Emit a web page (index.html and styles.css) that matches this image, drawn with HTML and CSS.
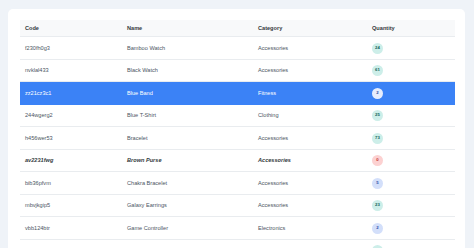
FILE: index.html
```html
<!DOCTYPE html>
<html>
<head>
<meta charset="utf-8">
<link rel="stylesheet" href="styles.css">
</head>
<body>
<div class="page">
  <div class="card">
    <table class="grid">
      <colgroup>
        <col class="c-code"><col class="c-name"><col class="c-cat"><col class="c-qty">
      </colgroup>
      <thead>
        <tr><th>Code</th><th>Name</th><th>Category</th><th>Quantity</th></tr>
      </thead>
      <tbody>
        <tr><td>f230fh0g3</td><td>Bamboo Watch</td><td>Accessories</td><td><span class="badge teal">24</span></td></tr>
        <tr><td>nvklal433</td><td>Black Watch</td><td>Accessories</td><td><span class="badge teal">61</span></td></tr>
        <tr class="selected"><td>zz21cz3c1</td><td>Blue Band</td><td>Fitness</td><td><span class="badge sel">2</span></td></tr>
        <tr><td>244wgerg2</td><td>Blue T-Shirt</td><td>Clothing</td><td><span class="badge teal">25</span></td></tr>
        <tr><td>h456wer53</td><td>Bracelet</td><td>Accessories</td><td><span class="badge teal">73</span></td></tr>
        <tr class="out"><td>av2231fwg</td><td>Brown Purse</td><td>Accessories</td><td><span class="badge red">0</span></td></tr>
        <tr><td>bib36pfvm</td><td>Chakra Bracelet</td><td>Accessories</td><td><span class="badge blue">5</span></td></tr>
        <tr><td>mbvjkgip5</td><td>Galaxy Earrings</td><td>Accessories</td><td><span class="badge teal">23</span></td></tr>
        <tr><td>vbb124btr</td><td>Game Controller</td><td>Electronics</td><td><span class="badge blue">2</span></td></tr>
        <tr><td>cm230f032</td><td>Gaming Set</td><td>Electronics</td><td><span class="badge teal">63</span></td></tr>
      </tbody>
    </table>
  </div>
</div>
</body>
</html>
```

FILE: styles.css
```css
html, body {
  margin: 0;
  padding: 0;
  background: #eff3f8;
  font-family: "Liberation Sans", Arial, sans-serif;
  overflow: hidden;
}
.page {
  padding: 9px 9px 0 8px;
}
.card {
  background: #ffffff;
  border-radius: 5px;
  padding: 11px 10px 12px 12px;
}
.grid {
  width: 435px;
  border-collapse: collapse;
  table-layout: fixed;
  font-size: 5.6px;
  line-height: 6.5px;
  color: #4b5563;
}
.c-code { width: 102px; }
.c-name { width: 131px; }
.c-cat { width: 114px; }
.c-qty { width: 88px; }
th {
  text-align: left;
  font-weight: 700;
  color: #343a40;
  background: #f8f9fa;
  padding: 5px 5px 4.5px;
  border-bottom: 1px solid #e9ecef;
}
td {
  padding: 7.5px 5px 7.5px;
  border-bottom: 1px solid #e9ecef;
  height: 6.5px;
}
tr.selected td {
  background: #3b82f6;
  color: #ffffff;
  border-bottom-color: #3b82f6;
}
tr.out td {
  font-weight: 700;
  font-style: italic;
  color: #343a40;
}
.badge {
  display: inline-flex;
  align-items: center;
  justify-content: center;
  width: 11px;
  height: 11px;
  margin: -3px 0;
  border-radius: 50%;
  font-size: 4.3px;
  font-weight: 700;
  font-style: normal;
  vertical-align: middle;
}
.teal { background: #cdeee9; color: #0f5f57; }
.red { background: #fcd1d1; color: #c23030; }
.blue { background: #d3dffa; color: #2f4fa8; }
.sel { background: #e6edfd; color: #2a4b9b; }
```
